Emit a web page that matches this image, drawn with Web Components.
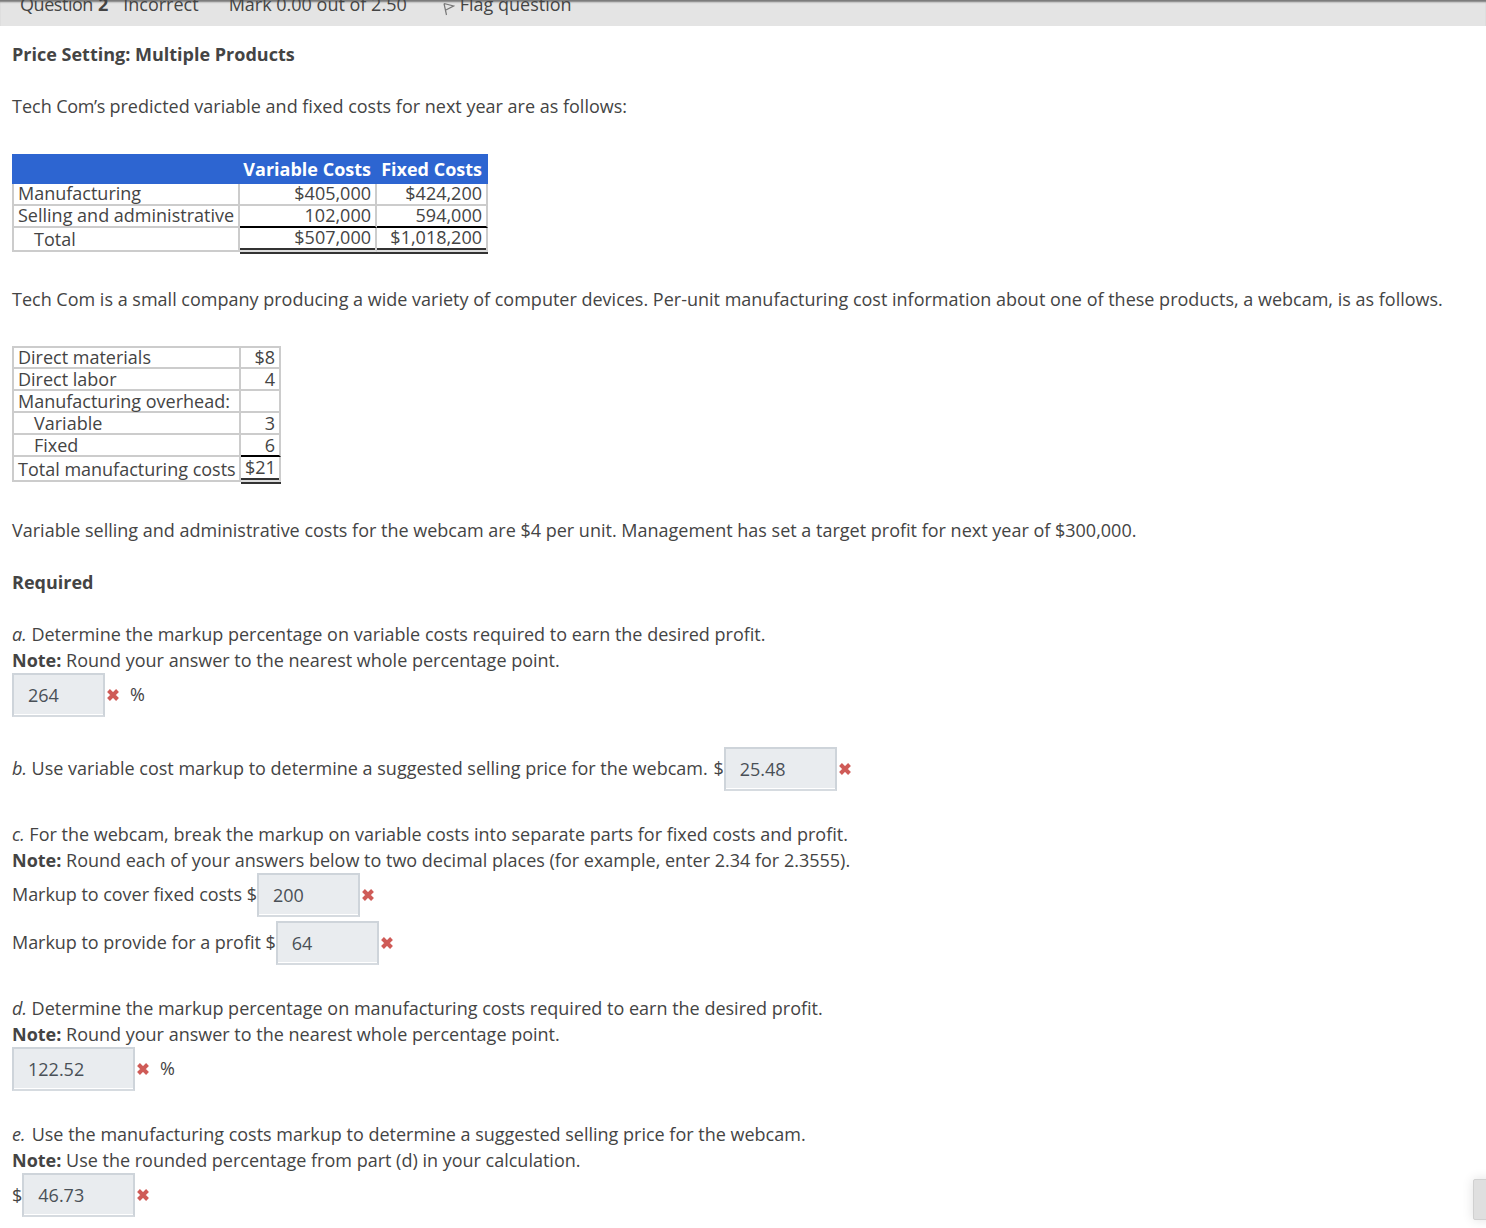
<!DOCTYPE html>
<html lang="en">
<head>
<meta charset="utf-8">
<title>Question 2</title>
<style>
html,body{margin:0;padding:0;background:#fff;}
body{font-family:'Open Sans',sans-serif;font-size:18px;line-height:26px;color:#444;height:1228px;overflow:hidden;}
q-para b{font-weight:700;}
q-para i.wide{margin-right:1.5px;}
q-para.field > span{margin-bottom:2px;}
.tight{letter-spacing:-.4px;}
.snug{letter-spacing:-.04px;}
</style>
</head>
<body>
<script>
class QuestionBar extends HTMLElement{
    constructor(){
        super();
        this.attachShadow({mode:'open'});
        this.shadowRoot.innerHTML=`
            <style>
                :host{
                    display:block;
                    height:26px;
                    overflow:hidden;
                    background:#e4e4e4;
                    box-shadow:inset 0 3px 2px -1px #777;
                    color:#444;
                }
                .row{
                    display:flex;
                    align-items:center;
                    margin-top:-9px;
                    padding-left:20px;
                    height:26px;
                    white-space:nowrap;
                }
                .q{letter-spacing:-.45px;}
                b{font-weight:700;margin-left:5px;letter-spacing:0;}
                .status{margin-left:15px;}
                .mark{margin-left:30px;}
                svg{margin-left:35px;margin-right:5px;margin-top:10px;}
            </style>
            <div class="row">
                <span class="q">Question<b>2</b></span>
                <span class="status">Incorrect</span>
                <span class="mark">Mark 0.00 out of 2.50</span>
                <svg width="13" height="14" viewBox="0 0 13 14" fill="none" stroke="#777" stroke-width="1.2">
                    <path d="M2 1.5 L4.5 13 M2 1.5 L11.5 4 L3.4 8.2"/>
                </svg>
                <span>Flag question</span>
            </div>
        `;
    }
}
customElements.define('question-bar',QuestionBar);

class QPara extends HTMLElement{
    constructor(){
        super();
        this.attachShadow({mode:'open'});
        this.shadowRoot.innerHTML=`
            <style>
                :host{display:flex;align-items:center;white-space:nowrap;}
            </style>
            <slot></slot>
        `;
    }
}
customElements.define('q-para',QPara);

class LedgerTable extends HTMLElement{
    constructor(){
        super();
        this.attachShadow({mode:'open'});
    }
    connectedCallback(){
        let data = JSON.parse(this.getAttribute('data'));
        let widths = JSON.parse(this.getAttribute('widths'));
        let total = widths.reduce((a,b)=>a+b,0);
        let head = '';
        if(data.head){
            head = '<tr class="head">'+data.head.map(t=>'<th>'+t+'</th>').join('')+'</tr>';
        }
        let body = data.rows.map(function(r,i){
            let next = data.rows[i+1];
            let cells = r.cells.map(function(t,c){
                let cls = c==0 ? (r.indent ? 'label indent' : 'label') : 'num';
                if(c>0 && next && next.total) cls += ' before-total';
                if(c>0 && r.total) cls += ' total';
                return '<td class="'+cls+'">'+t+'</td>';
            }).join('');
            return '<tr'+(r.total?' class="t-row"':'')+'>'+cells+'</tr>';
        }).join('');
        let cols = widths.map(w=>'<col style="width:'+w+'px">').join('');
        this.shadowRoot.innerHTML=`
            <style>
                :host{display:block;color:#444;}
                table{
                    width:${total}px;
                    border-collapse:separate;
                    border-spacing:0;
                    table-layout:fixed;
                    font-size:18px;
                    line-height:18px;
                    white-space:nowrap;
                }
                th{
                    background:#2d65d1;
                    color:#fff;
                    font-weight:700;
                    text-align:right;
                    height:30px;
                    padding:0 6px 0 0;
                }
                td{
                    padding:0 4px 2px 4px;
                    border-right:2px solid #ccc;
                    border-bottom:2px solid #ccc;
                    vertical-align:top;
                }
                td.label{border-left:2px solid #ccc;}
                td.indent{padding-left:20px;}
                td.num{text-align:right;}
                td.before-total{border-bottom-color:#000;}
                tr.t-row td.label{padding-top:2px;}
                tr.t-row td.num{padding-bottom:4px;}
                td.total{
                    border-bottom-color:#ddd;
                    box-shadow:inset 0 -2px 0 #333,0 2px 0 #333;
                }
                /* the table without a header has a ruled top, rows sit a pixel lower */
                table.boxed td{padding-top:1px;padding-bottom:1px;}
                table.boxed tr:first-child td{border-top:2px solid #ccc;padding-top:0;}
                table.boxed tr.t-row td.label{padding-top:3px;padding-bottom:2px;}
                table.boxed tr.t-row td.num{padding-top:1px;padding-bottom:4px;}
            </style>
            <table class="${data.head?'':'boxed'}"><colgroup>${cols}</colgroup>${head}${body}</table>
        `;
    }
}
customElements.define('ledger-table',LedgerTable);

class AnswerBox extends HTMLElement{
    constructor(){
        super();
        this.attachShadow({mode:'open'});
        this.shadowRoot.innerHTML=`
            <style>
                :host{
                    display:inline-flex;
                    align-items:center;
                    box-sizing:border-box;
                    height:44px;
                    padding-left:14px;
                    background:#e9ecef;
                    border:2px solid #ced4da;
                    border-bottom-color:#d6dbe0;
                    box-shadow:inset 0 -1px 0 #fff;
                    color:#495057;
                    flex:none;
                }
            </style>
            <slot></slot>
        `;
    }
    connectedCallback(){
        this.style.width = (this.getAttribute('w') || 100)+'px';
    }
}
customElements.define('answer-box',AnswerBox);

class WrongMark extends HTMLElement{
    constructor(){
        super();
        this.attachShadow({mode:'open'});
        this.shadowRoot.innerHTML=`
            <style>
                :host{display:inline-flex;flex:none;margin-left:1px;}
            </style>
            <svg width="14" height="14" viewBox="0 0 14 14">
                <path d="M2.5 2.5 L11.5 11.5 M11.5 2.5 L2.5 11.5" stroke="#cf5b57" stroke-width="4" stroke-linecap="butt"/>
            </svg>
        `;
    }
}
customElements.define('wrong-mark',WrongMark);

class ScrollThumb extends HTMLElement{
    constructor(){
        super();
        this.attachShadow({mode:'open'});
        this.shadowRoot.innerHTML=`
            <style>
                :host{
                    position:absolute;
                    left:1473px;
                    top:1179px;
                    width:20px;
                    height:39px;
                    background:#dfdfdf;
                    border:1px solid #d0d0d0;
                    border-radius:2px;
                    box-shadow:0 0 12px rgba(0,0,0,.12);
                }
            </style>
        `;
    }
}
customElements.define('scroll-thumb',ScrollThumb);

class QuizPage extends HTMLElement{
    constructor(){
        super();
        this.attachShadow({mode:'open'});
        this.shadowRoot.innerHTML=`
            <style>
                :host{display:block;}
                main{display:flex;flex-direction:column;padding:15px 12px 0;}
                ::slotted(*){flex:none;}
            </style>
            <slot name="bar"></slot>
            <main><slot></slot></main>
            <slot name="over"></slot>
        `;
    }
}
customElements.define('quiz-page',QuizPage);
</script>

<quiz-page>
    <question-bar slot="bar"></question-bar>

    <q-para><b>Price Setting: Multiple Products</b></q-para>
    <q-para style="margin-top:26px"><span>Tech <span class="tight">Com’s</span> predicted variable and fixed costs for next year are as follows:</span></q-para>
    <ledger-table style="margin-top:35px" widths="[228,137,111]" data='{"head":["","Variable Costs","Fixed Costs"],"rows":[{"cells":["Manufacturing","$405,000","$424,200"]},{"cells":["Selling and administrative","102,000","594,000"]},{"total":true,"indent":true,"cells":["Total","$507,000","$1,018,200"]}]}'></ledger-table>
    <q-para style="margin-top:34px">Tech Com is a small company producing a wide variety of computer devices. Per-unit manufacturing cost information about one of these products, a webcam, is as follows.</q-para>
    <ledger-table style="margin-top:34px" widths="[229,40]" data='{"rows":[{"cells":["Direct materials","$8"]},{"cells":["Direct labor","4"]},{"cells":["Manufacturing overhead:","&nbsp;"]},{"indent":true,"cells":["Variable","3"]},{"indent":true,"cells":["Fixed","6"]},{"total":true,"cells":["Total manufacturing costs","$21"]}]}'></ledger-table>
    <q-para style="margin-top:35px">Variable selling and administrative costs for the webcam are $4 per unit. Management has set a target profit for next year of $300,000.</q-para>
    <q-para style="margin-top:26px"><b>Required</b></q-para>

    <q-para style="margin-top:26px"><span><i>a.</i> Determine the markup percentage on variable costs required to earn the desired profit.</span></q-para>
    <q-para><span><b>Note:</b> Round your answer to the nearest whole percentage point.</span></q-para>
    <q-para class="field"><answer-box w="93">264</answer-box><wrong-mark></wrong-mark><span style="margin-left:10px">%</span></q-para>

    <q-para class="field" style="margin-top:30px"><span><i>b.</i> Use variable cost markup to determine a suggested selling price for the webcam. <span style="margin-left:1px">$</span></span><answer-box w="113">25.48</answer-box><wrong-mark></wrong-mark></q-para>

    <q-para style="margin-top:30px"><span><i>c.</i> For the webcam, break the markup on variable costs into separate parts for fixed costs and profit.</span></q-para>
    <q-para><span><b>Note:</b> Round each of your answers below to two decimal places (for example, enter 2.34 for 2.3555).</span></q-para>
    <q-para class="field"><span class="snug">Markup to cover fixed costs $</span><answer-box w="103">200</answer-box><wrong-mark></wrong-mark></q-para>
    <q-para class="field" style="margin-top:4px"><span class="snug">Markup to provide for a profit $</span><answer-box w="103">64</answer-box><wrong-mark></wrong-mark></q-para>

    <q-para style="margin-top:30px"><span><i>d.</i> Determine the markup percentage on manufacturing costs required to earn the desired profit.</span></q-para>
    <q-para><span><b>Note:</b> Round your answer to the nearest whole percentage point.</span></q-para>
    <q-para class="field"><answer-box w="123">122.52</answer-box><wrong-mark></wrong-mark><span style="margin-left:10px">%</span></q-para>

    <q-para style="margin-top:30px"><span><i class="wide">e.</i> Use the manufacturing costs markup to determine a suggested selling price for the webcam.</span></q-para>
    <q-para><span><b>Note:</b> Use the rounded percentage from part (d) in your calculation.</span></q-para>
    <q-para><span>$</span><answer-box w="113">46.73</answer-box><wrong-mark></wrong-mark></q-para>

    <scroll-thumb slot="over"></scroll-thumb>
</quiz-page>
</body>
</html>
